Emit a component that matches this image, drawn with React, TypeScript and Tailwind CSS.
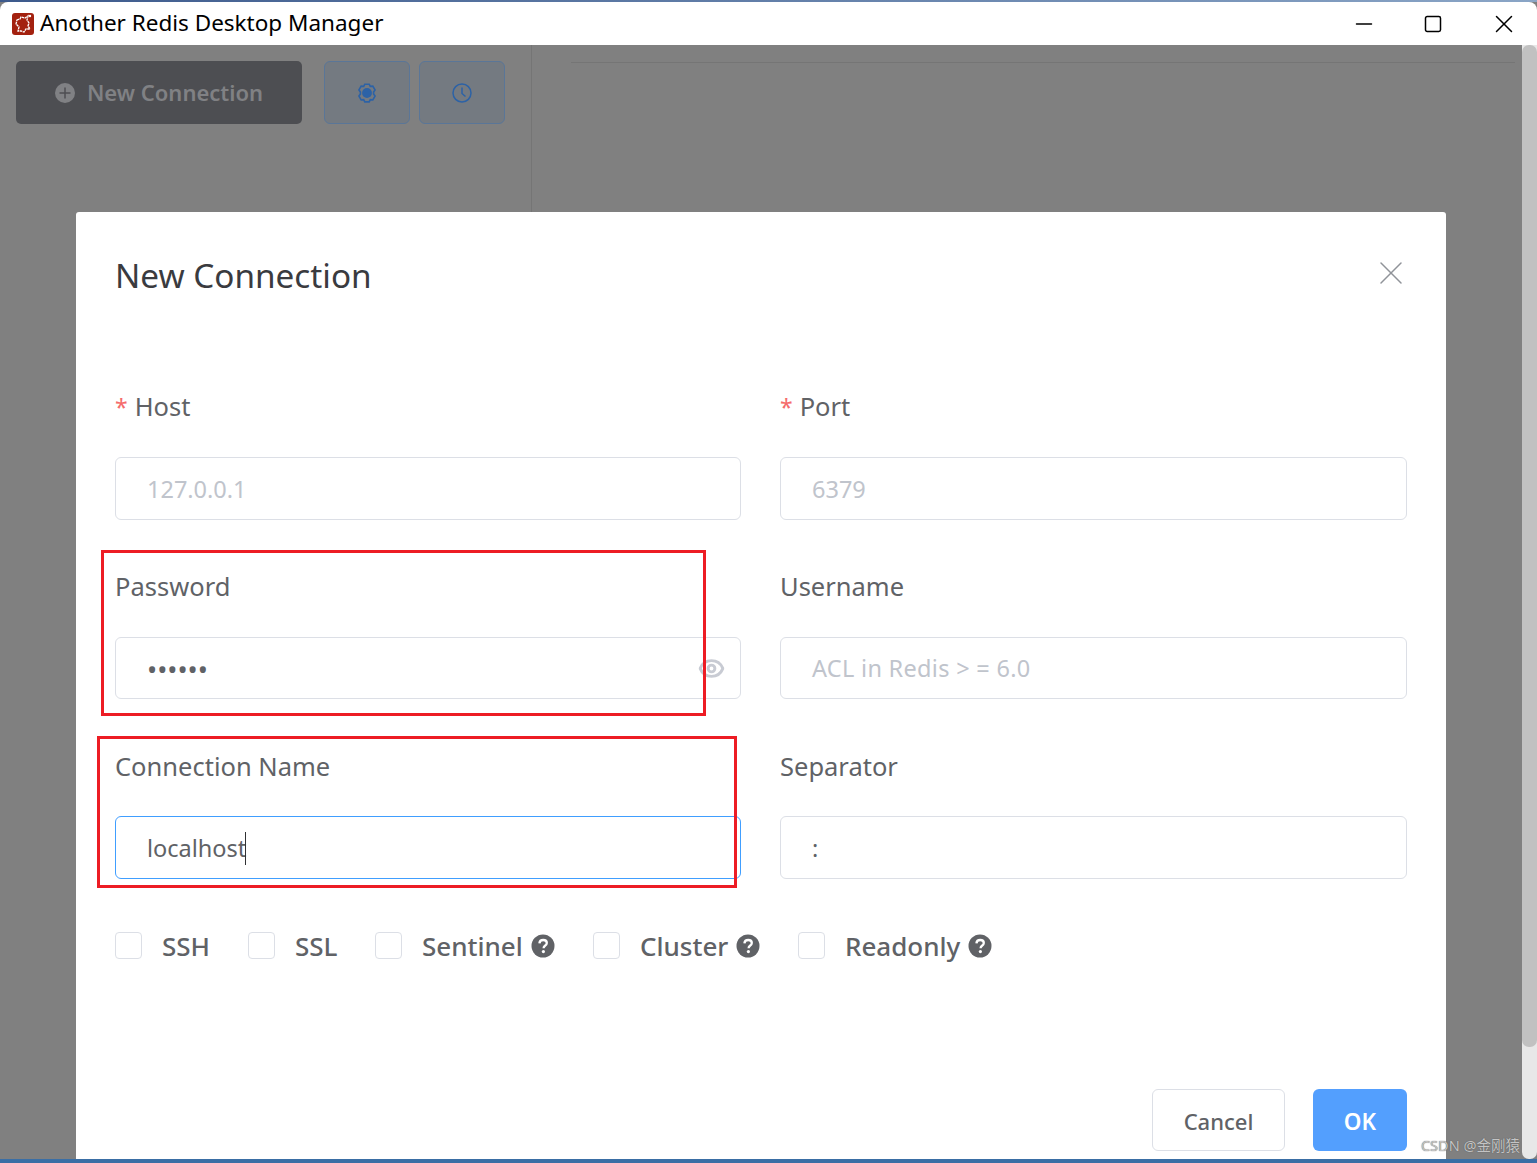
import { Minus, Square, X, Eye } from 'lucide-react';

const font = 'font-["Noto_Sans","Open_Sans","Noto_Sans_CJK_SC",sans-serif]';

function QuestionIcon() {
  return (
    <svg viewBox="0 0 24 24" className="w-[24px] h-[24px] ml-[8px] shrink-0">
      <circle cx="12" cy="12" r="11.5" fill="#606266" />
      <path d="M8.400 9.400c.2-2.200 1.700-3.400 3.800-3.400 2.100 0 3.600 1.200 3.600 3 0 1.300-.7 2-1.800 2.800-1 .7-1.400 1.200-1.400 2.400" fill="none" stroke="#fff" strokeWidth="2.300" />
      <circle cx="12.400" cy="17.600" r="1.600" fill="#fff" />
    </svg>
  );
}

function Logo() {
  return (
    <svg viewBox="0 0 22 22" className="w-[22px] h-[22px] shrink-0">
      <rect width="22" height="22" rx="3" fill="#a3210f" />
      <path d="M5 7l3-1 1-2 4 1 3-2-1 4 2 3-1 3 2 3-4 0-2 3-3-1-3 0 1-4-3-3z" fill="none" stroke="#fff" strokeWidth="1.300" strokeDasharray="2.500 .6" />
      <circle cx="18" cy="3" r="1.200" fill="#fff" />
    </svg>
  );
}

function Field({ label, required, children }: { label: string; required?: boolean; children: React.ReactNode }) {
  return (
    <div className="h-[180px] flex flex-col">
      <div className="h-[62px] flex items-center pt-[2px] text-[25.5px] text-[#606266] leading-none">
        {required && <span className="text-[#f56c6c] mr-[7px] text-[23px]">*</span>}
        {label}
      </div>
      {children}
    </div>
  );
}

function Input({ value, placeholder, focused, className = 'mt-[20px] h-[63px]', children }: { value?: string; placeholder?: string; focused?: boolean; className?: string; children?: React.ReactNode }) {
  return (
    <div className={`relative rounded-[6px] border flex items-center pl-[31px] pt-[2px] text-[23.5px] ${className} ${focused ? 'border-[#409eff]' : 'border-[#dcdfe6]'}`}>
      {value && <span className="text-[#606266]">{value}</span>}
      {placeholder && <span className="text-[#c0c4cc]">{placeholder}</span>}
      {children}
    </div>
  );
}

function Check({ label, help, className }: { label: string; help?: boolean; className: string }) {
  return (
    <div className={`flex items-center ${className}`}>
      <span className="w-[27px] h-[27px] rounded-[4px] border border-[#dcdfe6] bg-white shrink-0" />
      <span className="ml-[20px] text-[26px] font-medium text-[#606266] leading-none">{label}</span>
      {help && <QuestionIcon />}
    </div>
  );
}

export default function App() {
  return (
    <div className={`relative w-[1537px] h-[1163px] overflow-hidden flex flex-col bg-[#808080] ${font}`}>
      <div className="h-[2px] shrink-0 bg-gradient-to-r from-[#3d5a8c] to-[#8aa5c6]" />
      <div className="h-[43px] shrink-0 bg-white rounded-t-[8px] flex items-center pl-[12px]">
        <Logo />
        <span className="ml-[6px] text-[22.5px] text-black leading-none">Another Redis Desktop Manager</span>
        <div className="ml-auto flex items-center text-black mr-[18px]">
          <Minus className="w-[26px] h-[26px] mr-[46px]" strokeWidth={1.200} />
          <Square className="w-[20px] h-[20px] mr-[46px]" strokeWidth={1.800} />
          <X className="w-[30px] h-[30px]" strokeWidth={1.200} />
        </div>
      </div>

      <div className="flex-1 flex min-h-0">
        <div className="w-[532px] shrink-0 border-r border-[#757575] flex items-start gap-[22px] pt-[16px] pl-[16px]">
          <div className="w-[286px] h-[63px] rounded-[5px] bg-[#4d4e52] flex items-center justify-center text-[22px] font-semibold text-[#808184]">
            <svg viewBox="0 0 20 20" className="w-[20px] h-[20px] mr-[12px]">
              <circle cx="10" cy="10" r="10" fill="#808184" />
              <path d="M10 4.500v11M4.500 10h11" stroke="#4d4e52" strokeWidth="1.500" />
            </svg>
            New Connection
          </div>
          <div className="flex gap-[9px]">
            <div className="w-[86px] h-[63px] rounded-[6px] border border-[#5a7698] bg-[#747a81] flex items-center justify-center">
              <svg viewBox="0 0 20 20" className="w-[22px] h-[22px] -ml-[1px]">
                <path d="M8 2h4l1 2 2.300-.2 2 3.400-1.300 1.800v2l1.300 1.800-2 3.400-2.300-.2-1 2H8l-1-2-2.300.2-2-3.400 1.300-1.800v-2L2.700 7.200l2-3.400 2.300.2z" fill="none" stroke="#2c62a6" strokeWidth="1.500" />
                <circle cx="10" cy="10" r="4.500" fill="#2c62a6" />
              </svg>
            </div>
            <div className="w-[86px] h-[63px] rounded-[6px] border border-[#5a7698] bg-[#747a81] flex items-center justify-center">
              <svg viewBox="0 0 20 20" className="w-[20px] h-[20px]" fill="none" stroke="#2c62a6" strokeWidth="1.500">
                <circle cx="10" cy="10" r="9" />
                <path d="M10 4.500v6l3.500 3" />
              </svg>
            </div>
          </div>
        </div>
        <div className="flex-1 pl-[39px] pr-[7px] pt-[17px]">
          <div className="border-t border-[#757575]" />
        </div>
        <div className="w-[15px] shrink-0 bg-[#e8e8e8] rounded-b-[7px]">
          <div className="h-[1002px] bg-[#c1c1c1] rounded-[7px]" />
        </div>
      </div>

      <div className="h-[4px] shrink-0 bg-[#3a6ea5]" />

      {/* dialog over the mask */}
      <div className="absolute left-[76px] top-[212px] w-[1370px] h-[947px] bg-white rounded-t-[3px] px-[39px] pt-[40px]">
        <div className="flex items-center justify-between h-[48px]">
          <h1 className="text-[33.300px] text-[#3a3b3f] leading-none">New Connection</h1>
          <X className="w-[40px] h-[40px] text-[#909399] -mt-[6px] -mr-[4px]" strokeWidth={0.900} />
        </div>
        <div className="mt-[75px] grid grid-cols-[626px_627px] gap-x-[39px]">
          <Field label="Host" required>
            <Input placeholder="127.0.0.1" />
          </Field>
          <Field label="Port" required>
            <Input placeholder="6379" />
          </Field>
          <Field label="Password">
            <Input className="mt-[20px] h-[62px]">
              <span className="text-[#606266] text-[27px] leading-none">••••••</span>
              <Eye className="absolute right-[15px] top-[17px] w-[27px] h-[27px] text-[#c8cbd3]" strokeWidth={2.600} />
            </Input>
          </Field>
          <Field label="Username">
            <Input className="mt-[20px] h-[62px]">
              <span className="text-[#c0c4cc] tracking-[0.3px]">{'ACL in Redis > = 6.0'}</span>
            </Input>
          </Field>
          <Field label="Connection Name">
            <Input value="localhost" focused className="mt-[19px] h-[63px]">
              <span className="w-[1px] h-[33px] -ml-[1px] bg-[#303133]" />
            </Input>
          </Field>
          <Field label="Separator">
            <Input value=":" className="mt-[19px] h-[63px]" />
          </Field>
        </div>
        <div className="mt-[17px] flex items-center">
          <Check label="SSH" className="w-[133px]" />
          <Check label="SSL" className="w-[127px]" />
          <Check label="Sentinel" help className="w-[218px]" />
          <Check label="Cluster" help className="w-[205px]" />
          <Check label="Readonly" help className="" />
        </div>
        <div className="mt-[130px] flex justify-end gap-[28px]">
          <div className="w-[133px] h-[62px] rounded-[6px] border border-[#dcdfe6] flex items-center justify-center pt-[2px] text-[22px] font-medium text-[#606266]">Cancel</div>
          <div className="w-[94px] h-[62px] rounded-[6px] bg-[#539ffe] flex items-center justify-center pt-[3px] text-[22.500px] font-semibold text-white">OK</div>
        </div>
      </div>

      {/* annotation boxes drawn on the screenshot */}
      <div className="absolute left-[101px] top-[550px] w-[605px] h-[166px] border-[3px] border-[#ed1c24]" />
      <div className="absolute left-[97px] top-[736px] w-[640px] h-[152px] border-[3px] border-[#ed1c24]" />
      <div className="absolute right-[17px] bottom-[11px] text-[14.500px] leading-none text-[#c4c4c4] [text-shadow:0_0_1px_#444]">CSDN @金刚猿</div>
    </div>
  );
}
